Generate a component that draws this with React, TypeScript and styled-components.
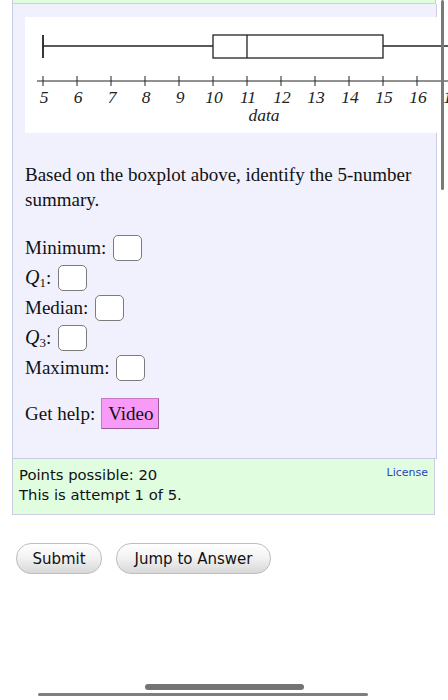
import React from "react"
import styled, {createGlobalStyle} from "styled-components"

const GlobalStyle = createGlobalStyle`
  html, body {
    margin: 0;
    padding: 0;
    background: #ffffff;
    overflow: hidden;
  }
  body {
    width: 448px;
    font-family: "Liberation Serif", "Times New Roman", serif;
  }
`

const Page = styled.div`
  position: relative;
  width: 448px;
  height: 700px;
  display: flex;
  flex-direction: column;
  overflow: hidden;
`

const PrevPanel = styled.div`
  margin-left: 12px;
  width: 422px;
  height: 3px;
  background: #e0fde0;
  border: 1px solid #c9cde6;
  border-top: none;
`

const QuestionPanel = styled.section`
  margin-left: 12px;
  width: 400px;
  padding: 13px 11px 29px 12px;
  background: #f1f1fe;
  border: 1px solid #c9cde6;
  border-top: none;
`

const Plot = styled.svg`
  display: block;
  width: 424px;
  height: 116px;
  background: #ffffff;
  overflow: hidden;
`

const Prompt = styled.p`
  margin: 29px 0 21px 0;
  font-size: 19px;
  line-height: 25px;
  color: #111;
`

const AnswerRow = styled.div`
  display: flex;
  align-items: center;
  height: 30px;
  font-size: 19px;
  color: #111;
`

const Label = styled.span`
  margin-right: 7px;
`

const MathQ = styled.span`
  font-style: italic;
  font-size: 20px;
  sub {
    font-style: normal;
    font-size: 13px;
    vertical-align: -3px;
  }
`

const AnswerBox = styled.span`
  display: inline-block;
  width: 27px;
  height: 24px;
  border: 1px solid #7c7c7c;
  border-radius: 5px;
  background: #ffffff;
`

const HelpRow = styled.div`
  display: flex;
  align-items: center;
  margin-top: 15px;
  font-size: 19px;
  color: #111;
`

const VideoButton = styled.span`
  margin-left: 6px;
  padding: 4px 5px 4px 6px;
  background: #f89af8;
  border: 1px solid #c77ac7;
  border-right-color: #9a5a9a;
  border-bottom-color: #9a5a9a;
  font-size: 19px;
  line-height: 21px;
`

const InfoPanel = styled.div`
  margin-left: 12px;
  width: 409px;
  padding: 6px 6px 9px 6px;
  background: #e0fde0;
  border: 1px solid #c9cde6;
  border-top: none;
  display: flex;
  justify-content: space-between;
  font-family: "DejaVu Sans", Verdana, sans-serif;
  font-size: 14.8px;
  line-height: 20px;
  color: #111;
`

const License = styled.span`
  font-size: 11px;
  line-height: 16px;
  color: #2b3fc4;
`

const ButtonRow = styled.div`
  display: flex;
  gap: 14px;
  margin: 28px 0 0 16px;
`

const PillButton = styled.button<{w: number}>`
  width: ${p => p.w}px;
  height: 31px;
  border: 1px solid #bdbdbd;
  border-radius: 15px;
  background: linear-gradient(#ffffff, #f3f3f3 45%, #d8d8d8);
  font-family: "DejaVu Sans", Verdana, sans-serif;
  font-size: 15px;
  color: #111;
  padding: 0;
`

const HomeArea = styled.div`
  margin-top: auto;
  display: flex;
  flex-direction: column;
  padding-bottom: 4px;
`

const HomeBar = styled.div`
  margin-left: 145px;
  width: 159px;
  height: 6px;
  border-radius: 3px;
  background: #747474;
`

const HomeLine = styled.div`
  margin: 3px 0 0 38px;
  width: 330px;
  height: 3px;
  border-radius: 2px;
  background: #7e7e7e;
`

const ScrollIndicator = styled.div`
  position: absolute;
  left: 441px;
  top: 0;
  width: 3px;
  height: 190px;
  border-radius: 2px;
  background: #7a7a7a;
`

const ticks = [5, 6, 7, 8, 9, 10, 11, 12, 13, 14, 15, 16, 17]
const xOf = (v: number) => 18 + (v - 5) * 34

function BoxPlot() {
  return (
    <Plot viewBox="0 0 424 116">
      <g stroke="#222" strokeWidth={1.3} fill="none">
        <line x1={xOf(5)} y1={18} x2={xOf(5)} y2={41} strokeWidth={1.8} />
        <line x1={xOf(5)} y1={29} x2={xOf(10)} y2={29} />
        <rect x={xOf(10)} y={18} width={xOf(15) - xOf(10)} height={23} />
        <line x1={xOf(11)} y1={18} x2={xOf(11)} y2={41} />
        <line x1={xOf(15)} y1={29} x2={430} y2={29} />
        <line x1={12} y1={64} x2={430} y2={64} strokeWidth={1} />
        {ticks.map(t => (
          <line key={t} x1={xOf(t)} y1={59} x2={xOf(t)} y2={69} strokeWidth={1} />
        ))}
      </g>
      <g
        fontFamily='"Liberation Serif", "Times New Roman", serif'
        fontStyle="italic"
        fontSize={17.5}
        fill="#222"
        textAnchor="middle"
      >
        {ticks.map(t => (
          <text key={t} x={xOf(t) + 1} y={86}>
            {t}
          </text>
        ))}
        <text x={239} y={104}>data</text>
      </g>
    </Plot>
  )
}

export default function App() {
  return (
    <Page>
      <GlobalStyle />
      <PrevPanel />
      <QuestionPanel>
        <BoxPlot />
        <Prompt>Based on the boxplot above, identify the 5-number summary.</Prompt>
        <AnswerRow>
          <Label>Minimum:</Label>
          <AnswerBox />
        </AnswerRow>
        <AnswerRow>
          <Label>
            <MathQ>Q<sub>1</sub></MathQ>:
          </Label>
          <AnswerBox />
        </AnswerRow>
        <AnswerRow>
          <Label>Median:</Label>
          <AnswerBox />
        </AnswerRow>
        <AnswerRow>
          <Label>
            <MathQ>Q<sub>3</sub></MathQ>:
          </Label>
          <AnswerBox />
        </AnswerRow>
        <AnswerRow>
          <Label>Maximum:</Label>
          <AnswerBox />
        </AnswerRow>
        <HelpRow>
          Get help:
          <VideoButton>Video</VideoButton>
        </HelpRow>
      </QuestionPanel>
      <InfoPanel>
        <div>
          Points possible: 20
          <br />
          This is attempt 1 of 5.
        </div>
        <License>License</License>
      </InfoPanel>
      <ButtonRow>
        <PillButton w={86}>Submit</PillButton>
        <PillButton w={155}>Jump to Answer</PillButton>
      </ButtonRow>
      <HomeArea>
        <HomeBar />
        <HomeLine />
      </HomeArea>
      <ScrollIndicator />
    </Page>
  )
}
